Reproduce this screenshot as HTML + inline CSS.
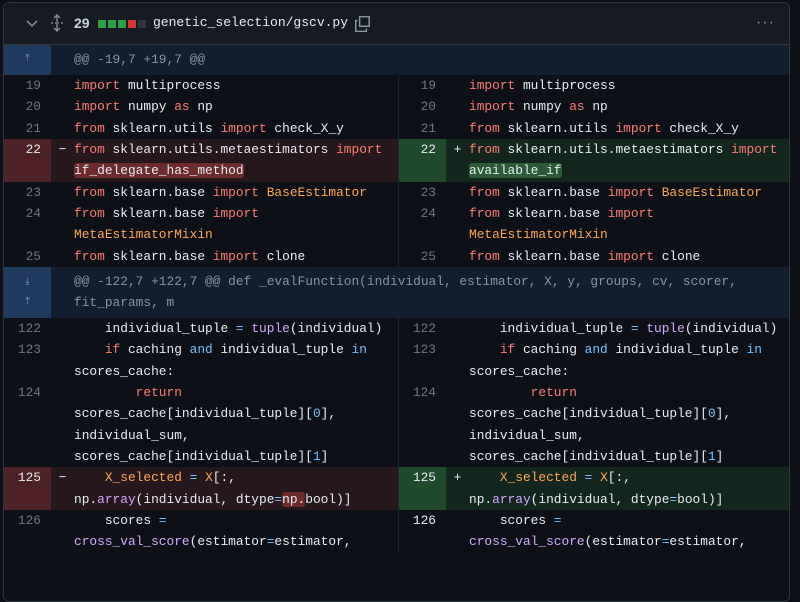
<!DOCTYPE html>
<html><head><meta charset="utf-8"><style>
*{margin:0;padding:0;box-sizing:border-box}
body{width:800px;height:557px;background:#0d1117;overflow:hidden;font-family:"Liberation Mono",monospace;font-size:12.85px;color:#e6edf3}
.box{position:absolute;left:3px;top:2px;width:787px;height:600px;border:1px solid #30363d;border-radius:6px;overflow:hidden;background:#0d1117}
.hdr{height:42px;background:#161b22;border-bottom:1px solid #30363d;position:relative;font-family:"Liberation Sans",sans-serif}
.row{display:flex;line-height:21.33px;white-space:pre}
.half{display:flex;width:394px;flex:none}
.half.r{width:393px;border-left:1px solid #21262d}
.n{width:47px;flex:none;text-align:right;padding-right:10px;color:#6e7681}
.m{width:23px;flex:none;text-align:center}
.c{flex:1;white-space:pre-wrap;padding-right:4px}
.del .n{background:#4d2126;color:#e6edf3}.del .m,.del .c{background:#25171c}
.add .n{background:#1f4a2c;color:#e6edf3}.add .m,.add .c{background:#12261e}
.hunk{display:flex;background:#121d2f;color:#8b949e;line-height:21.33px}
.hunk .n{background:#1e3a5f;width:47px}
.k{color:#ff7b72}.f{color:#d2a8ff}.o{color:#ffa657}.b{color:#79c0ff}
.wd{background:#6e2b2e;border-radius:3px}.wa{background:#2a5a36;border-radius:3px}
</style></head><body>
<div class="box">
<div class="hdr">
<svg style="position:absolute;left:22px;top:16px" width="12" height="10" viewBox="0 0 12 10"><path d="M1 2l5 5 5-5" stroke="#8b949e" stroke-width="1.5" fill="none"/></svg>
<svg style="position:absolute;left:46px;top:11px" width="14" height="18" viewBox="0 0 14 18"><path d="M7 1v16M4 4l3-3 3 3M4 14l3 3 3-3" stroke="#8b949e" stroke-width="1.3" fill="none"/><path d="M1 9h2M5 9h1M8 9h1M11 9h2" stroke="#8b949e" stroke-width="1.2"/></svg>
<span style="position:absolute;left:70px;top:12px;font-weight:bold;font-size:14px;color:#c9d1d9">29</span>
<span style="position:absolute;left:94px;top:17px;width:8px;height:8px;background:#2ea043"></span>
<span style="position:absolute;left:104px;top:17px;width:8px;height:8px;background:#2ea043"></span>
<span style="position:absolute;left:114px;top:17px;width:8px;height:8px;background:#2ea043"></span>
<span style="position:absolute;left:124px;top:17px;width:8px;height:8px;background:#da3633"></span>
<span style="position:absolute;left:134px;top:17px;width:8px;height:8px;background:#30363d"></span>
<span style="position:absolute;left:149px;top:12px;font-family:'Liberation Mono',monospace;font-size:13px;color:#e6edf3">genetic_selection/gscv.py</span>
<svg style="position:absolute;left:350px;top:12px" width="18" height="18" viewBox="0 0 16 16"><path d="M5 1.5h8.5v8.5H5z M3 5H1.5v9.5H11V12" stroke="#8b949e" stroke-width="1.3" fill="none"/></svg>
<span style="position:absolute;left:752px;top:11px;color:#8b949e;font-size:16px;letter-spacing:1px">···</span>
</div>
<div class="hunk" style="height:30px;padding-top:4px"><div class="n" style="margin-top:-4px;height:30px;color:#8b949e;text-align:center;padding:0;font-size:10px;line-height:30px">⤒</div><div style="padding-left:23px">@@ -19,7 +19,7 @@</div></div>
<div class="row"><div class="half"><div class="n">19</div><div class="m"></div><div class="c"><span class="k">import</span> multiprocess</div></div><div class="half r"><div class="n">19</div><div class="m"></div><div class="c"><span class="k">import</span> multiprocess</div></div></div>
<div class="row"><div class="half"><div class="n">20</div><div class="m"></div><div class="c"><span class="k">import</span> numpy <span class="k">as</span> np</div></div><div class="half r"><div class="n">20</div><div class="m"></div><div class="c"><span class="k">import</span> numpy <span class="k">as</span> np</div></div></div>
<div class="row"><div class="half"><div class="n">21</div><div class="m"></div><div class="c"><span class="k">from</span> sklearn.utils <span class="k">import</span> check_X_y</div></div><div class="half r"><div class="n">21</div><div class="m"></div><div class="c"><span class="k">from</span> sklearn.utils <span class="k">import</span> check_X_y</div></div></div>
<div class="row"><div class="half del"><div class="n">22</div><div class="m">−</div><div class="c"><span class="k">from</span> sklearn.utils.metaestimators <span class="k">import</span> <span class="wd">if_delegate_has_method</span></div></div><div class="half r add"><div class="n">22</div><div class="m">+</div><div class="c"><span class="k">from</span> sklearn.utils.metaestimators <span class="k">import</span> <span class="wa">available_if</span></div></div></div>
<div class="row"><div class="half"><div class="n">23</div><div class="m"></div><div class="c"><span class="k">from</span> sklearn.base <span class="k">import</span> <span class="o">BaseEstimator</span></div></div><div class="half r"><div class="n">23</div><div class="m"></div><div class="c"><span class="k">from</span> sklearn.base <span class="k">import</span> <span class="o">BaseEstimator</span></div></div></div>
<div class="row"><div class="half"><div class="n">24</div><div class="m"></div><div class="c"><span class="k">from</span> sklearn.base <span class="k">import</span> <span class="o">MetaEstimatorMixin</span></div></div><div class="half r"><div class="n">24</div><div class="m"></div><div class="c"><span class="k">from</span> sklearn.base <span class="k">import</span> <span class="o">MetaEstimatorMixin</span></div></div></div>
<div class="row"><div class="half"><div class="n">25</div><div class="m"></div><div class="c"><span class="k">from</span> sklearn.base <span class="k">import</span> clone</div></div><div class="half r"><div class="n">25</div><div class="m"></div><div class="c"><span class="k">from</span> sklearn.base <span class="k">import</span> clone</div></div></div>
<div class="hunk" style="height:51px;padding-top:4px"><div class="n" style="margin-top:-4px;height:51px;color:#8b949e;text-align:center;padding:6px 0 0;font-size:10px;line-height:20px">⤓<br>⤒</div><div style="padding-left:23px;width:700px;white-space:pre-wrap">@@ -122,7 +122,7 @@ def _evalFunction(individual, estimator, X, y, groups, cv, scorer, fit_params, m</div></div>
<div class="row"><div class="half"><div class="n">122</div><div class="m"></div><div class="c">    individual_tuple <span class="b">=</span> <span class="f">tuple</span>(individual)</div></div><div class="half r"><div class="n">122</div><div class="m"></div><div class="c">    individual_tuple <span class="b">=</span> <span class="f">tuple</span>(individual)</div></div></div>
<div class="row"><div class="half"><div class="n">123</div><div class="m"></div><div class="c">    <span class="k">if</span> caching <span class="b">and</span> individual_tuple <span class="b">in</span> scores_cache:</div></div><div class="half r"><div class="n">123</div><div class="m"></div><div class="c">    <span class="k">if</span> caching <span class="b">and</span> individual_tuple <span class="b">in</span> scores_cache:</div></div></div>
<div class="row"><div class="half"><div class="n">124</div><div class="m"></div><div class="c">        <span class="k">return</span>
scores_cache[individual_tuple][<span class="b">0</span>],
individual_sum,
scores_cache[individual_tuple][<span class="b">1</span>]</div></div><div class="half r"><div class="n">124</div><div class="m"></div><div class="c">        <span class="k">return</span>
scores_cache[individual_tuple][<span class="b">0</span>],
individual_sum,
scores_cache[individual_tuple][<span class="b">1</span>]</div></div></div>
<div class="row"><div class="half del"><div class="n">125</div><div class="m">−</div><div class="c">    <span class="o">X_selected</span> <span class="b">=</span> <span class="o">X</span>[:,
np.<span class="f">array</span>(individual, dtype<span class="b">=</span><span class="wd">np.</span>bool)]</div></div><div class="half r add"><div class="n">125</div><div class="m">+</div><div class="c">    <span class="o">X_selected</span> <span class="b">=</span> <span class="o">X</span>[:,
np.<span class="f">array</span>(individual, dtype<span class="b">=</span>bool)]</div></div></div>
<div class="row"><div class="half"><div class="n">126</div><div class="m"></div><div class="c">    scores <span class="b">=</span>
<span class="f">cross_val_score</span>(estimator<span class="b">=</span>estimator,</div></div><div class="half r"><div class="n" style="color:#e6edf3">126</div><div class="m"></div><div class="c">    scores <span class="b">=</span>
<span class="f">cross_val_score</span>(estimator<span class="b">=</span>estimator,</div></div></div>
</div>
</body></html>
